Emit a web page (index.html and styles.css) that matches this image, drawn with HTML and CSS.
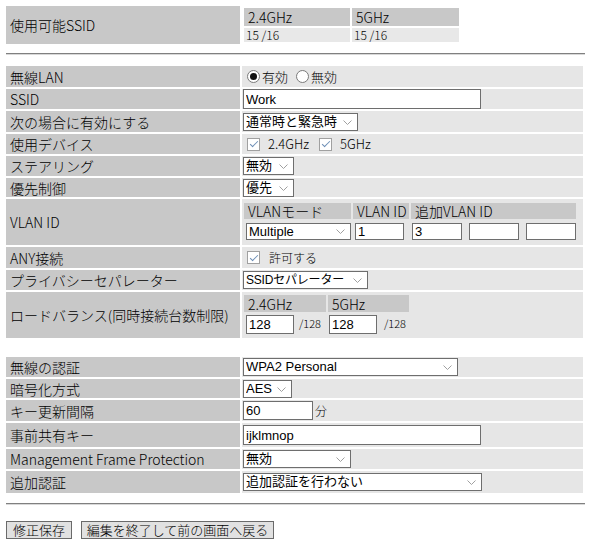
FILE: index.html
```html
<!DOCTYPE html>
<html lang="ja">
<head>
<meta charset="utf-8">
<title>無線LAN設定</title>
<link rel="stylesheet" href="styles.css">
</head>
<body>
<table class="grid top">
  <tr>
    <th class="lbl">使用可能SSID</th>
    <td class="plain">
      <table class="sub count">
        <colgroup><col class="c106"><col class="c107"></colgroup>
        <tr><th class="hd h18">2.4GHz</th><th class="hd h18">5GHz</th></tr>
        <tr><td class="num">15 /16</td><td class="num">15 /16</td></tr>
      </table>
    </td>
  </tr>
</table>

<hr class="rule">

<table class="grid main">
  <tr class="h21">
    <th class="lbl">無線LAN</th>
    <td class="val">
      <div class="opts">
        <input class="rd first" type="radio" name="wlan" checked><span class="opt">有効</span>
        <input class="rd second" type="radio" name="wlan"><span class="opt">無効</span>
      </div>
    </td>
  </tr>
  <tr class="h20">
    <th class="lbl">SSID</th>
    <td class="val"><input class="tx w238 h20i" type="text" value="Work"></td>
  </tr>
  <tr class="h21">
    <th class="lbl">次の場合に有効にする</th>
    <td class="val"><span class="sel w115"><select><option>通常時と緊急時</option></select><svg class="chev" viewBox="0 0 9 5"><path d="M0.5 0.5L4.5 4.5L8.5 0.5"/></svg></span></td>
  </tr>
  <tr class="h20">
    <th class="lbl">使用デバイス</th>
    <td class="val">
      <div class="opts">
        <input class="cb first" type="checkbox" checked><span class="mono ml8">2.4GHz</span>
        <input class="cb ml10" type="checkbox" checked><span class="mono ml8">5GHz</span>
      </div>
    </td>
  </tr>
  <tr class="h20">
    <th class="lbl">ステアリング</th>
    <td class="val"><span class="sel w51"><select><option>無効</option></select><svg class="chev" viewBox="0 0 9 5"><path d="M0.5 0.5L4.5 4.5L8.5 0.5"/></svg></span></td>
  </tr>
  <tr class="h19">
    <th class="lbl">優先制御</th>
    <td class="val"><span class="sel w51"><select><option>優先</option></select><svg class="chev" viewBox="0 0 9 5"><path d="M0.5 0.5L4.5 4.5L8.5 0.5"/></svg></span></td>
  </tr>
  <tr class="h46">
    <th class="lbl">VLAN ID</th>
    <td class="val nest2">
      <table class="sub vlan">
        <colgroup><col class="c107"><col class="c56"><col class="c55"><col class="c55"><col class="c51"></colgroup>
        <tr><th class="hd h16">VLANモード</th><th class="hd h16">VLAN ID</th><th class="hd h16" colspan="3">追加VLAN ID</th></tr>
        <tr class="h20">
          <td><span class="sel w105 s17 ml2"><select><option>Multiple</option></select><svg class="chev" viewBox="0 0 9 5"><path d="M0.5 0.5L4.5 4.5L8.5 0.5"/></svg></span></td>
          <td><input class="tx w49 h17i ml2" type="text" value="1"></td>
          <td><input class="tx w50 h17i ml1" type="text" value="3"></td>
          <td><input class="tx w50 h17i ml1" type="text" value=""></td>
          <td><input class="tx w50 h17i ml1" type="text" value=""></td>
        </tr>
      </table>
    </td>
  </tr>
  <tr class="h21">
    <th class="lbl">ANY接続</th>
    <td class="val">
      <div class="opts">
        <input class="cb first" type="checkbox" checked><span class="small ml9">許可する</span>
      </div>
    </td>
  </tr>
  <tr class="h20">
    <th class="lbl">プライバシーセパレーター</th>
    <td class="val"><span class="sel w125 compact"><select><option>SSIDセパレーター</option></select><svg class="chev" viewBox="0 0 9 5"><path d="M0.5 0.5L4.5 4.5L8.5 0.5"/></svg></span></td>
  </tr>
  <tr class="h46">
    <th class="lbl">ロードバランス(同時接続台数制限)</th>
    <td class="val nest1">
      <table class="sub lb">
        <colgroup><col class="c82"><col class="c81"></colgroup>
        <tr><th class="hd h17">2.4GHz</th><th class="hd h17">5GHz</th></tr>
        <tr class="h21">
          <td><input class="tx w48 h19i ml2" type="text" value="128"><span class="tiny ml5">/128</span></td>
          <td><input class="tx w48 h19i ml1" type="text" value="128"><span class="tiny ml7">/128</span></td>
        </tr>
      </table>
    </td>
  </tr>
</table>

<table class="grid main sec2">
  <tr class="h20">
    <th class="lbl">無線の認証</th>
    <td class="val"><span class="sel w215"><select><option>WPA2 Personal</option></select><svg class="chev" viewBox="0 0 9 5"><path d="M0.5 0.5L4.5 4.5L8.5 0.5"/></svg></span></td>
  </tr>
  <tr class="h19">
    <th class="lbl">暗号化方式</th>
    <td class="val"><span class="sel w49"><select><option>AES</option></select><svg class="chev" viewBox="0 0 9 5"><path d="M0.5 0.5L4.5 4.5L8.5 0.5"/></svg></span></td>
  </tr>
  <tr class="h21">
    <th class="lbl">キー更新間隔</th>
    <td class="val"><div class="opts"><input class="tx w70 h19i" type="text" value="60"><span class="small ml2">分</span></div></td>
  </tr>
  <tr class="h24">
    <th class="lbl">事前共有キー</th>
    <td class="val"><input class="tx w238 h20i" type="text" value="ijklmnop"></td>
  </tr>
  <tr class="h20">
    <th class="lbl">Management Frame Protection</th>
    <td class="val"><span class="sel w108"><select><option>無効</option></select><svg class="chev" viewBox="0 0 9 5"><path d="M0.5 0.5L4.5 4.5L8.5 0.5"/></svg></span></td>
  </tr>
  <tr class="h22">
    <th class="lbl">追加認証</th>
    <td class="val"><span class="sel w239"><select><option>追加認証を行わない</option></select><svg class="chev" viewBox="0 0 9 5"><path d="M0.5 0.5L4.5 4.5L8.5 0.5"/></svg></span></td>
  </tr>
</table>

<hr class="rule rule2">

<div class="actions">
  <button class="btn bw66" type="button">修正保存</button>
  <button class="btn bw193" type="button">編集を終了して前の画面へ戻る</button>
</div>
</body>
</html>
```

FILE: styles.css
```css
* {
  box-sizing: border-box;
}

body {
  margin: 4px;
  background: #ffffff;
  color: #000000;
  font-family: "Noto Sans CJK JP", sans-serif;
  font-weight: 300;
  font-size: 14px;
}

/* ---------- outer grids ---------- */
.grid {
  border-collapse: separate;
  border-spacing: 2px;
}

.grid.main {
  width: 581px;
  table-layout: fixed;
}

.grid th,
.grid td {
  padding: 0;
}

.lbl {
  width: 234px;
  background: #c8c8c8;
  text-align: left;
  font-weight: 300;
  padding: 0 4px !important;
  white-space: nowrap;
  line-height: 16px;
  vertical-align: middle;
}

.top .lbl {
  height: 38px;
}

.plain {
  vertical-align: top;
}

.val {
  background: #e6e6e6;
  padding: 0 1px !important;
  vertical-align: middle;
  font-family: "Liberation Sans", "Noto Sans CJK JP", sans-serif;
  font-weight: 400;
  font-size: 13px;
  line-height: 16px;
}

.val.nest2 {
  padding: 2px 0 !important;
}

.val.nest1 {
  padding: 1px 0 !important;
}

.sec2 {
  margin-top: 15px;
}

/* row heights */
.h19 > th, .h19 > td { height: 19px; }
.h20 > th, .h20 > td { height: 20px; }
.h21 > th, .h21 > td { height: 21px; }
.h22 > th, .h22 > td { height: 22px; }
.h24 > th, .h24 > td { height: 24px; }
.h46 > th, .h46 > td { height: 46px; }

/* ---------- nested tables ---------- */
.sub {
  border-collapse: separate;
  border-spacing: 2px;
  table-layout: fixed;
}

.sub th,
.sub td {
  padding: 0;
  vertical-align: middle;
  text-align: left;
  white-space: nowrap;
}

.count { width: 219px; }
.vlan { width: 336px; }
.lb { width: 169px; }

.c51 { width: 51px; }
.c55 { width: 55px; }
.c56 { width: 56px; }
.c81 { width: 81px; }
.c82 { width: 82px; }
.c106 { width: 106px; }
.c107 { width: 107px; }

.hd {
  background: #c8c8c8;
  font-family: "Noto Sans CJK JP", sans-serif;
  font-weight: 300;
  font-size: 14px;
  line-height: 16px;
  padding-left: 4px !important;
}

.h16 { height: 16px; }
.h17 { height: 17px; }
.h18 { height: 18px; }

.num {
  height: 14px;
  background: #e8e8e8;
  font-family: "Noto Sans CJK JP", sans-serif;
  font-weight: 300;
  font-size: 12px;
  line-height: 14px;
  padding-left: 2px !important;
}

/* ---------- hr ---------- */
.rule {
  height: 0;
  margin: 7px 0 9px 2px;
  border: 0;
  border-top: 1px solid #808080;
  border-bottom: 1px solid #d8d8d8;
  width: 579px;
}

.rule2 {
  margin-top: 8px;
  margin-bottom: 16px;
}

/* ---------- inline content ---------- */
.opts {
  display: flex;
  align-items: center;
}

.opt {
  font-family: "Noto Sans CJK JP", sans-serif;
  font-weight: 300;
  font-size: 13px;
  margin-left: 2px;
}

.mono {
  font-family: "Noto Sans CJK JP", sans-serif;
  font-weight: 300;
  font-size: 13px;
}

.small {
  font-family: "Noto Sans CJK JP", sans-serif;
  font-weight: 300;
  font-size: 12px;
}

.tiny {
  font-family: "Noto Sans CJK JP", sans-serif;
  font-weight: 300;
  font-size: 11px;
}

.first { margin-left: 4px !important; }
.second { margin-left: 8px !important; }
.ml1 { margin-left: 1px !important; }
.ml2 { margin-left: 2px !important; }
.ml5 { margin-left: 5px !important; }
.ml7 { margin-left: 7px !important; }
.ml8 { margin-left: 8px !important; }
.ml9 { margin-left: 9px !important; }
.ml10 { margin-left: 10px !important; }

/* radio */
.rd {
  -webkit-appearance: none;
  appearance: none;
  width: 13px;
  height: 13px;
  margin: 0;
  border: 1px solid #7a7a7a;
  border-radius: 50%;
  background: #ffffff;
  display: inline-grid;
  place-content: center;
}

.rd:checked::before {
  content: "";
  width: 7px;
  height: 7px;
  border-radius: 50%;
  background: #111111;
}

/* checkbox */
.cb {
  -webkit-appearance: none;
  appearance: none;
  width: 13px;
  height: 13px;
  margin: 0;
  border: 1px solid #a0a0a0;
  background: #ffffff;
  display: inline-grid;
  place-content: center;
}

.cb:checked::before {
  content: "";
  width: 7px;
  height: 3px;
  border-left: 1px solid #6b8db5;
  border-bottom: 1px solid #6b8db5;
  transform: translate(0, -1px) rotate(-45deg);
}

/* text inputs */
.tx {
  margin: 0;
  border: 1px solid #6e6e6e;
  border-radius: 0;
  background: #ffffff;
  padding: 0 2px;
  font-family: "Liberation Sans", "Noto Sans CJK JP", sans-serif;
  font-size: 13px;
  color: #000000;
  vertical-align: middle;
  outline: none;
}

.h17i { height: 17px; }
.h19i { height: 19px; }
.h20i { height: 20px; }

.w48 { width: 48px; }
.w49 { width: 49px; }
.w50 { width: 50px; }
.w51 { width: 51px; }
.w70 { width: 70px; }
.w105 { width: 105px; }
.w108 { width: 108px; }
.w115 { width: 115px; }
.w125 { width: 125px; }
.w215 { width: 215px; }
.w238 { width: 238px; }
.w239 { width: 239px; }

/* selects */
.sel {
  position: relative;
  display: inline-block;
  vertical-align: middle;
  height: 18px;
}

.sel select {
  -webkit-appearance: none;
  appearance: none;
  display: block;
  width: 100%;
  height: 18px;
  margin: 0;
  border: 1px solid #6e6e6e;
  border-radius: 0;
  background: #ffffff;
  padding: 0 14px 0 2px;
  font-family: "Liberation Sans", "Noto Sans CJK JP", sans-serif;
  font-size: 13px;
  line-height: 16px;
  color: #000000;
  outline: none;
}

.sel.compact select {
  font-size: 12px;
  letter-spacing: -0.2px;
}

.sel.s17,
.sel.s17 select {
  height: 17px;
}

.chev {
  position: absolute;
  right: 6px;
  top: 7px;
  width: 9px;
  height: 5px;
  fill: none;
  stroke: #a0a0a0;
  stroke-width: 1;
  pointer-events: none;
}

.s17 .chev {
  top: 6px;
}

/* buttons */
.actions {
  display: flex;
  gap: 9px;
  padding-left: 2px;
}

.btn {
  height: 18px;
  margin: 0;
  padding: 0;
  border: 1px solid #6a6a6a;
  border-radius: 0;
  background: #e1e1e1;
  font-family: "Noto Sans CJK JP", sans-serif;
  font-weight: 300;
  font-size: 13px;
  line-height: 16px;
  color: #000000;
  text-align: center;
  white-space: nowrap;
  overflow: visible;
}

.bw66 { width: 66px; }
.bw193 { width: 193px; }
```
